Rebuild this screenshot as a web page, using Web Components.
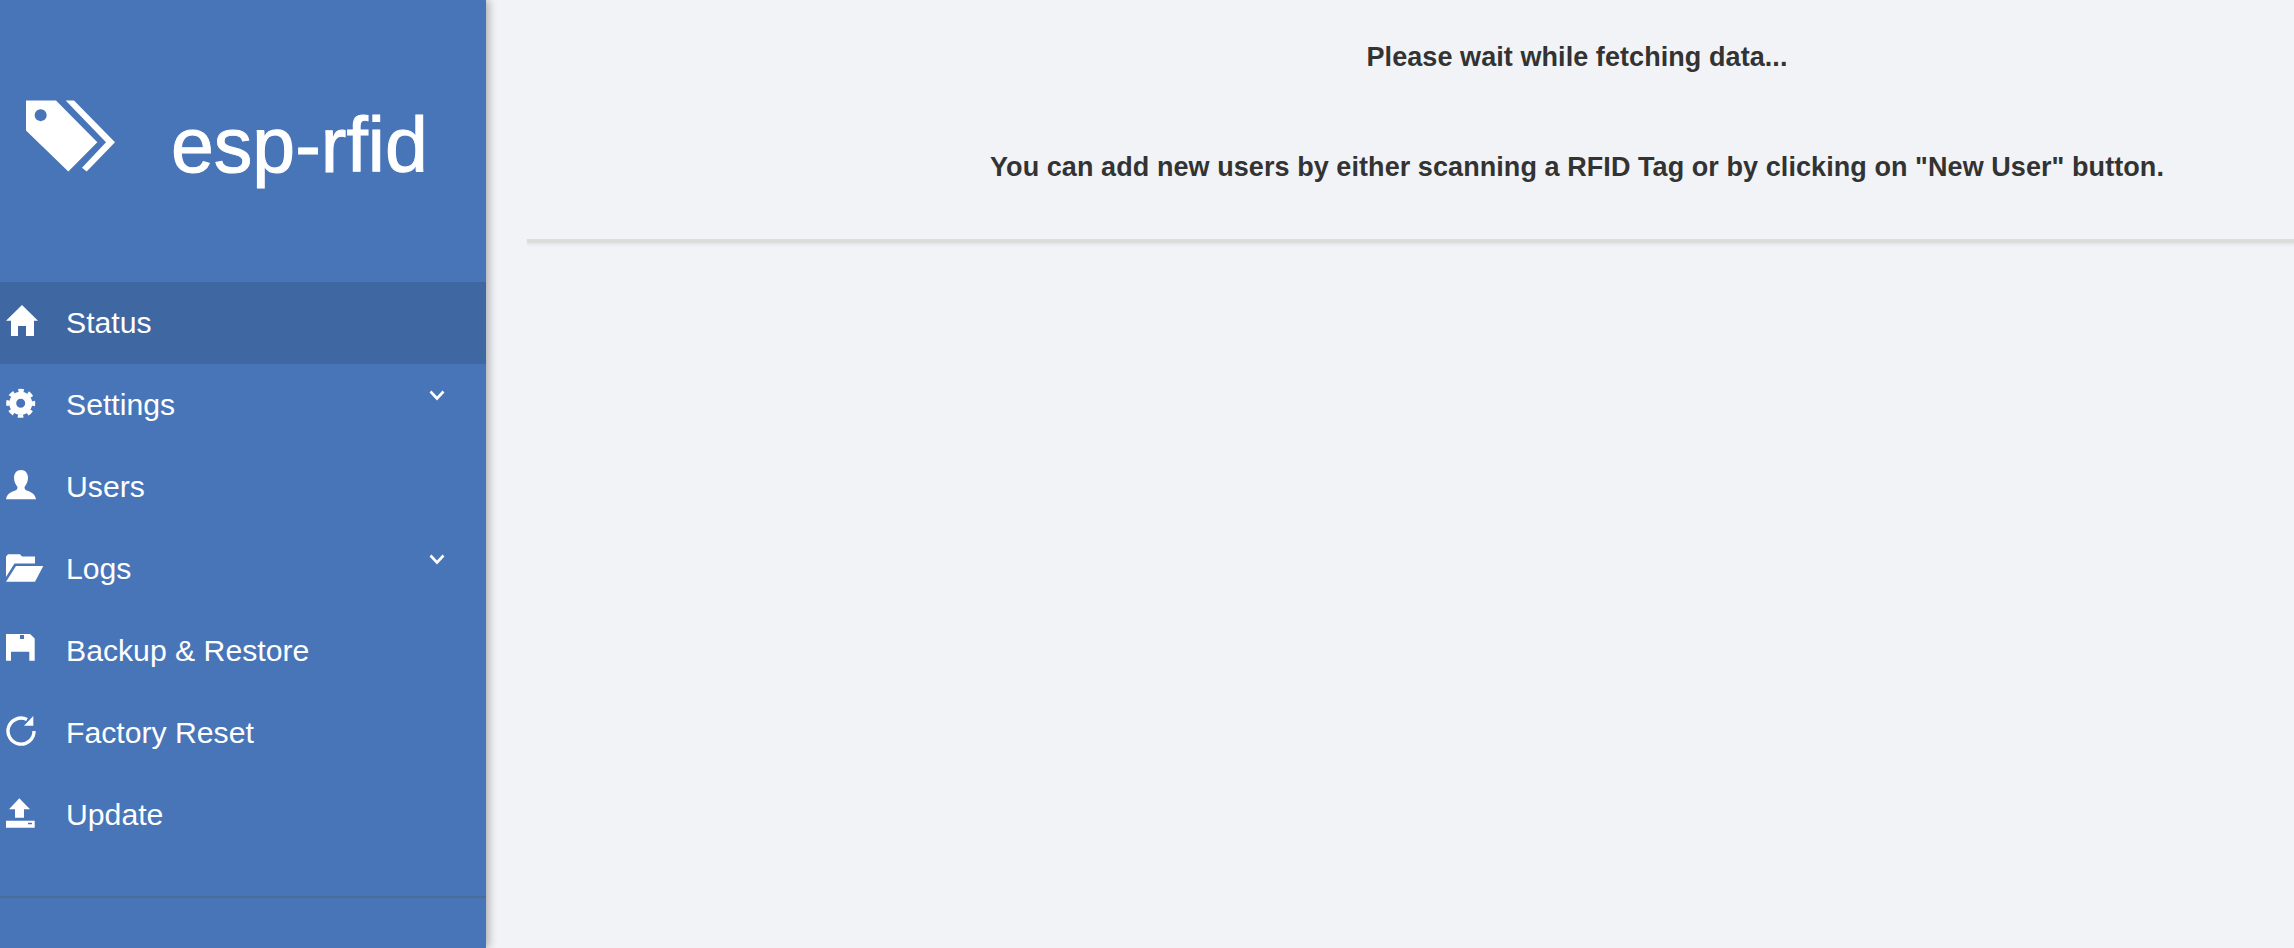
<!DOCTYPE html>
<html><head><meta charset="utf-8">
<style>
html,body{margin:0;padding:0;height:100%;overflow:hidden}
body{font-family:"Liberation Sans",Arial,sans-serif;background:#f1f3f7}
</style></head>
<body>
<template id="t-app"><style>
:host{display:flex;height:948px;width:2294px;overflow:hidden;background:#f1f3f7}
main{flex:none;width:2100px;margin-left:41px}
</style><slot name="side"></slot><main><slot></slot></main></template>

<template id="t-side"><style>
:host{display:block;flex:none;width:486px;height:948px;background:#4775b8;box-shadow:3px 0 8px rgba(0,0,0,.28);color:#fff;position:relative;z-index:1}
header{height:282px;box-sizing:border-box;padding:100px 0 0 26px;display:flex;align-items:flex-start}
svg{display:block;width:90px;height:72px;flex:none}
h1{margin:-1px 0 0 55px;font:400 77px/92px "Liberation Sans",Arial,sans-serif;-webkit-text-stroke:1px #fff}
footer{margin-top:40px;border-top:2px solid #4a6f93}
</style><header>
<svg viewBox="78 120 270 213"><path fill="#fff" fill-rule="evenodd" d="M78 120H168L292 245 205 333 78 210ZM122 146a18 18 0 1 0 .01 0Z"/><path fill="#fff" d="M197 120H222L345 245 260 333 246 322 318 245Z"/></svg>
<h1>esp-rfid</h1></header><slot></slot><footer></footer></template>

<template id="t-item"><style>
:host{display:flex;height:82px;align-items:center;padding-left:6px;position:relative;font:400 30.2px/34px "Liberation Sans",Arial,sans-serif;color:#fff}
:host([active]){background:#3f67a1}
.i{width:40px;height:40px;flex:none;margin:0 20px 6px 0}
.c{position:absolute;left:429px;top:26px;width:16px;height:11px;display:none}
:host([more]) .c{display:block}
</style><span class="i"><slot name="icon"></slot></span><span class="t"><slot></slot></span>
<svg class="c" viewBox="0 0 16 11"><path d="M1.500 1.500 8 8.500 14.500 1.500" fill="none" stroke="#fff" stroke-width="2.600"/></svg></template>

<template id="t-msg"><style>
:host{display:block;text-align:center;font:700 27px/32px "Liberation Sans",Arial,sans-serif;letter-spacing:.07px;color:#333}
</style><slot></slot></template>

<template id="t-rule"><style>
:host{display:block;height:4px;background:#dcdcdb;box-shadow:0 2px 3px rgba(0,0,0,.06);margin-top:56px}
</style></template>

<esp-app>
<esp-side slot="side">
<esp-item active><svg slot="icon" width="40" height="40" viewBox="0 0 40 40"><path fill="#fff" d="M16 5 32 20.700H28V36H20V26H12V36H5V20.700H0Z"/></svg>Status</esp-item>
<esp-item more><svg slot="icon" width="40" height="40" viewBox="0 0 40 40"><g fill="none" stroke="#fff"><circle cx="14.700" cy="21.300" r="8" stroke-width="7"/><circle cx="14.700" cy="21.300" r="12.800" stroke-width="3.400" stroke-dasharray="5.500 4.550" stroke-dashoffset="2.750"/></g></svg>Settings</esp-item>
<esp-item><svg slot="icon" width="40" height="40" viewBox="0 0 40 40"><path fill="#fff" d="M15 6C10.500 6 8 9.500 8 14 8 18 10 21 11.500 23 11.500 25 11 26 8 27 4 28.500 1 30 0 35.300H30C29 30 26 28.500 22 27 19 26 18.500 25 18.500 23 20 21 22 18 22 14 22 9.500 19.500 6 15 6Z"/></svg>Users</esp-item>
<esp-item more><svg slot="icon" width="40" height="40" viewBox="0 0 40 40"><path fill="#fff" d="M0 10.500 2 8.300H14L16 10.500H29V17.500H8.500L0 31ZM10 20H37.300L29 35.700H0Z"/></svg>Logs</esp-item>
<esp-item><svg slot="icon" width="40" height="40" viewBox="0 0 40 40"><path fill="#fff" fill-rule="evenodd" d="M0 6H24L28.700 10.500V32.700H23.300V23.700H5V32.700H0ZM14 7V11H18V7Z"/></svg>Backup &amp; Restore</esp-item>
<esp-item><svg slot="icon" width="40" height="40" viewBox="0 0 40 40"><path fill="none" stroke="#fff" stroke-width="3.400" d="M21 9.600A13 13 0 1 0 28 21"/><path fill="#fff" d="M27.300 6V15.700H18Z"/></svg>Factory Reset</esp-item>
<esp-item><svg slot="icon" width="40" height="40" viewBox="0 0 40 40"><path fill="#fff" fill-rule="evenodd" d="M13.300 6.300 24 17.300H18V25.700H9V17.300H3ZM0 28.700H28.700V35.700H0ZM22 30.700V32.300H26V30.700Z"/></svg>Update</esp-item>
</esp-side>
<esp-msg style="padding-top:41px">Please wait while fetching data...</esp-msg>
<esp-msg style="margin-top:78px">You can add new users by either scanning a RFID Tag or by clicking on "New User" button.</esp-msg>
<esp-rule></esp-rule>
</esp-app>
<script>
for (const [tag,id] of [['esp-app','t-app'],['esp-side','t-side'],['esp-item','t-item'],['esp-msg','t-msg'],['esp-rule','t-rule']]) {
  customElements.define(tag, class extends HTMLElement {
    constructor(){super();this.attachShadow({mode:'open'}).appendChild(document.getElementById(id).content.cloneNode(true));}
  });
}
</script>
</body></html>
